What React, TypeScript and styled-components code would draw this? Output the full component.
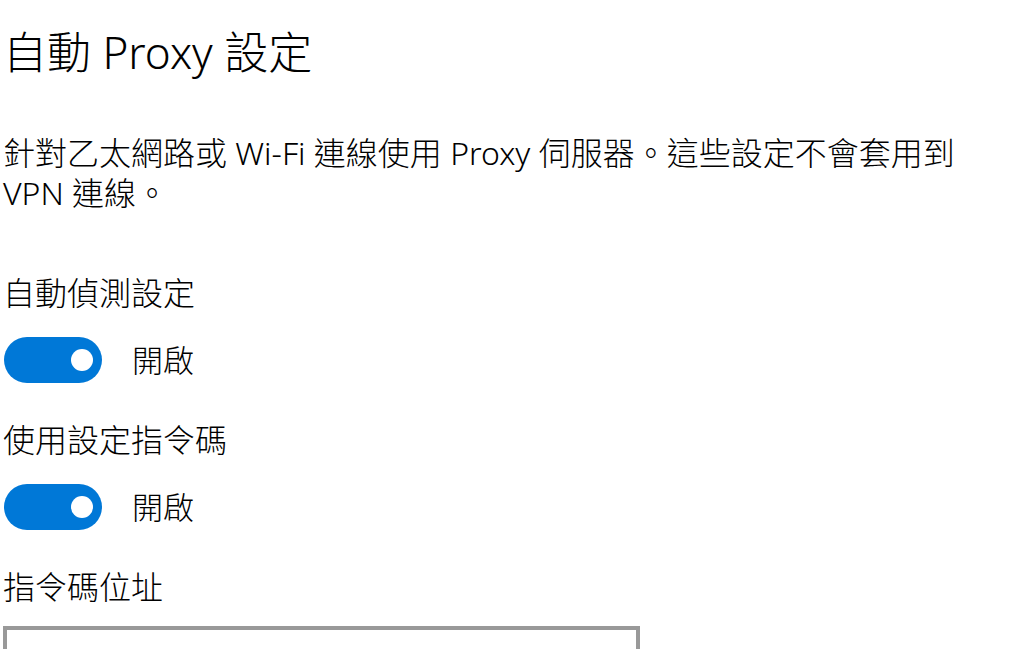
import React from 'react';
import styled, { createGlobalStyle } from 'styled-components';

const blue = '#0078d7';
const black = '#000000';
const fieldBorder = '#999999';

const GlobalStyle = createGlobalStyle`
  html, body {
    margin: 0;
    padding: 0;
    background: #ffffff;
    overflow: hidden;
  }
  body {
    font-family: "Noto Sans", "Noto Sans CJK TC", sans-serif;
    font-weight: 300;
    color: ${black};
  }
`;

const Page = styled.main`
  display: flex;
  flex-direction: column;
  align-items: flex-start;
  padding: 24px 0 0 3px;
  height: 649px;
  box-sizing: border-box;
`;

const Title = styled.h1`
  margin: 0 0 53px;
  font-size: 44px;
  line-height: 56px;
  font-weight: 300;
`;

const Description = styled.p`
  margin: 0 0 60px;
  width: 975px;
  font-size: 32px;
  line-height: 40px;
`;

const Setting = styled.section`
  display: flex;
  flex-direction: column;
  gap: 24px;
  & + & {
    margin-top: 37px;
  }
`;

const Label = styled.div<{ $top?: number }>`
  margin-top: ${(p) => p.$top ?? 0}px;
  font-size: 32px;
  line-height: 40px;
`;

const ToggleRow = styled.label`
  display: flex;
  align-items: center;
  gap: 30px;
  font-size: 31px;
  line-height: 40px;
  cursor: pointer;
`;

const Track = styled.span<{ $on: boolean }>`
  position: relative;
  display: block;
  width: 98px;
  height: 46px;
  margin-left: 1px;
  border-radius: 23px;
  box-sizing: border-box;
  background: ${(p) => (p.$on ? blue : 'transparent')};
  border: ${(p) => (p.$on ? 'none' : `3px solid ${black}`)};
`;

const Knob = styled.span<{ $on: boolean }>`
  position: absolute;
  top: 12px;
  left: ${(p) => (p.$on ? '67px' : '10px')};
  width: 22px;
  height: 22px;
  border-radius: 50%;
  background: ${(p) => (p.$on ? '#ffffff' : black)};
`;

const Field = styled.input`
  margin-top: 19px;
  width: 637px;
  height: 64px;
  box-sizing: border-box;
  border: 4px solid ${fieldBorder};
  background: #ffffff;
  font: inherit;
  font-size: 30px;
  padding: 0 12px;
  outline: none;
`;

type ToggleProps = { label: string; initial: boolean };

const ToggleSetting = ({ label, initial }: ToggleProps) => {
  const [on, setOn] = React.useState(initial);
  return (
    <Setting>
      <Label>{label}</Label>
      <ToggleRow onClick={() => setOn(!on)}>
        <Track $on={on}>
          <Knob $on={on} />
        </Track>
        {on ? '開啟' : '關閉'}
      </ToggleRow>
    </Setting>
  );
};

const App = () => (
  <>
    <GlobalStyle />
    <Page>
      <Title>自動 Proxy 設定</Title>
      <Description>
        針對乙太網路或 Wi-Fi 連線使用 Proxy 伺服器。這些設定不會套用到 VPN 連線。
      </Description>
      <ToggleSetting label="自動偵測設定" initial />
      <ToggleSetting label="使用設定指令碼" initial />
      <Label $top={37}>指令碼位址</Label>
      <Field type="text" aria-label="指令碼位址" />
    </Page>
  </>
);

export default App;
